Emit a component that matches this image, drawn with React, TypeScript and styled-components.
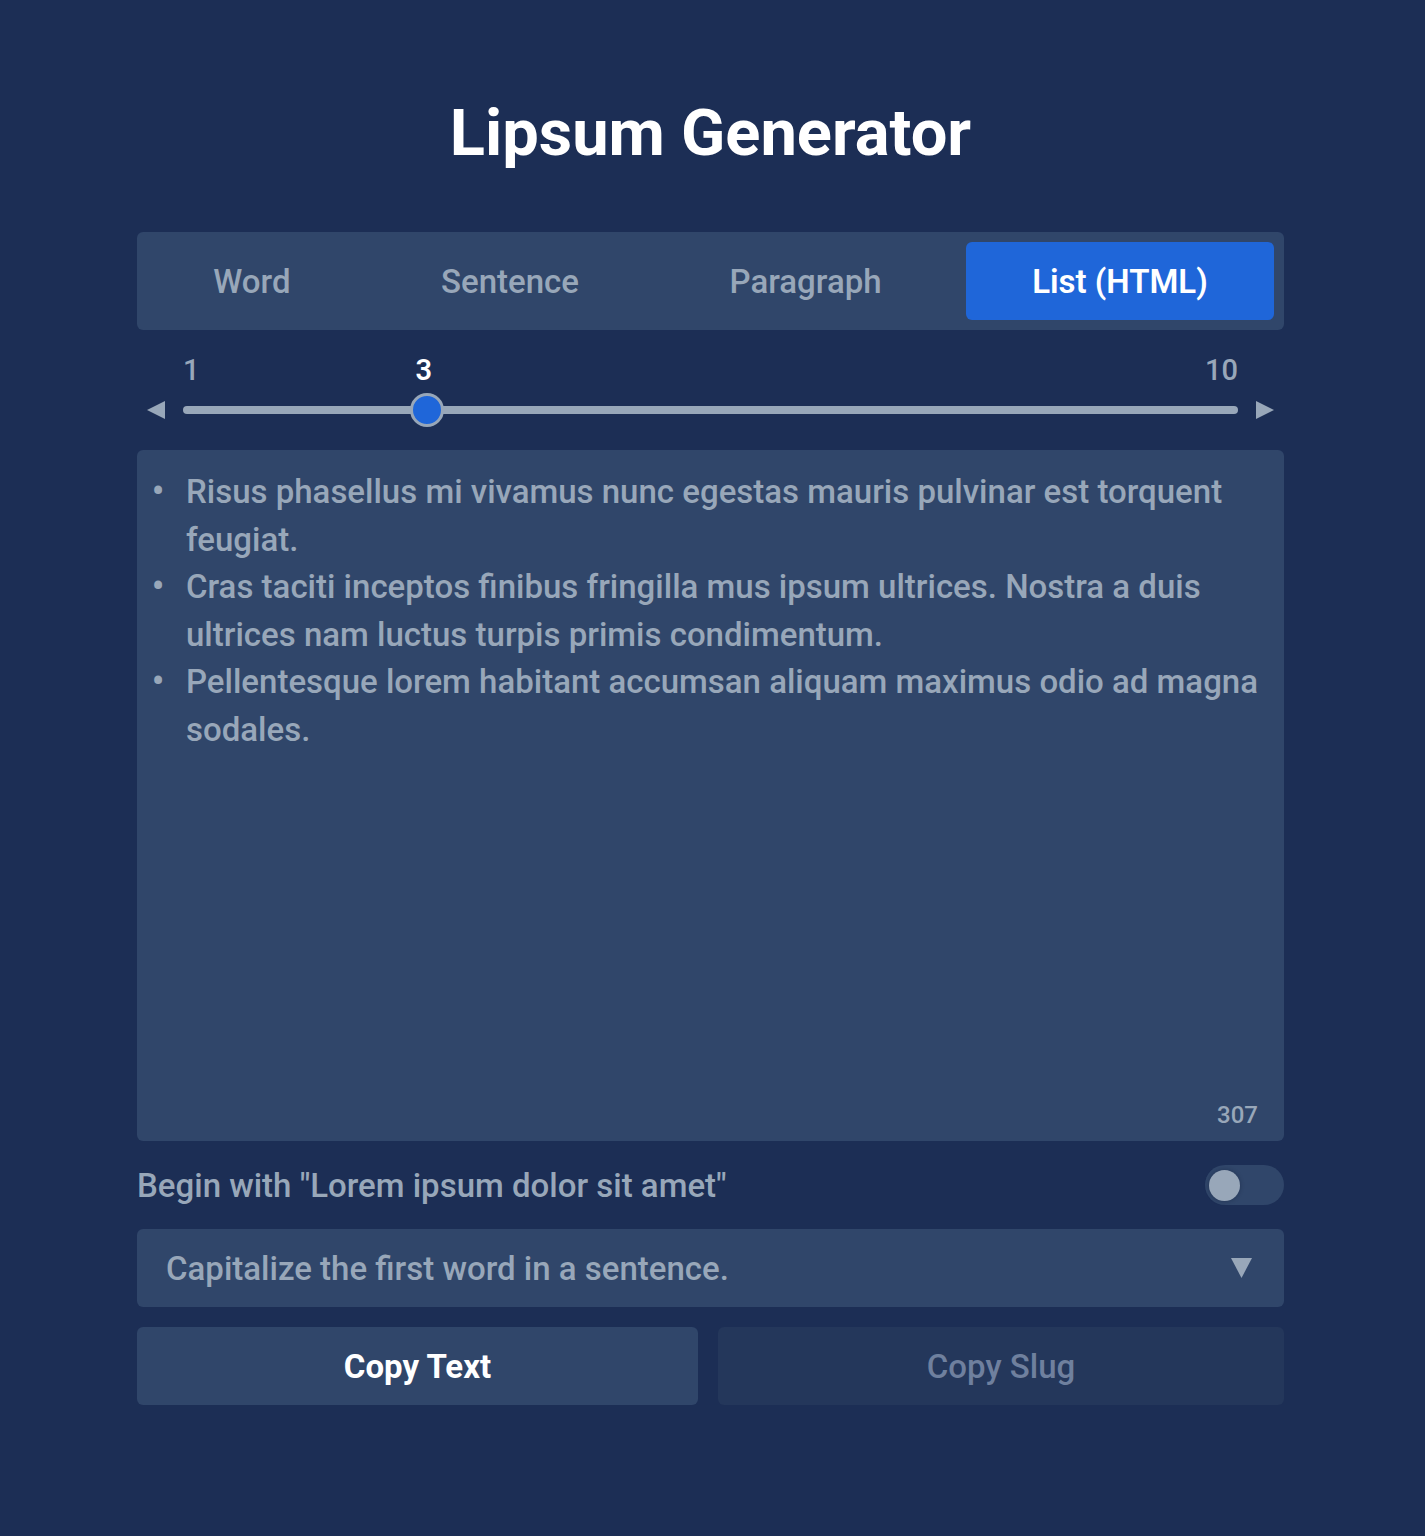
import React, { useState } from 'react';
import styled, { createGlobalStyle } from 'styled-components';

const colors = {
  page: '#1c2e55',
  panel: '#30466a',
  panelMuted: '#24375b',
  accent: '#1f66d9',
  text: '#98a7b9',
  textMuted: '#6f809e',
  white: '#ffffff',
};

const GlobalStyle = createGlobalStyle`
  html, body {
    margin: 0;
    padding: 0;
    background: ${colors.page};
  }
  body {
    min-height: 100vh;
    font-family: Roboto, "Liberation Sans", Arial, sans-serif;
    color: ${colors.text};
  }
  * {
    box-sizing: border-box;
  }
`;

const Page = styled.main`
  padding: 97px 141px 60px 137px;
  display: flex;
  flex-direction: column;
`;

const Title = styled.h1`
  margin: 0 0 63px;
  font-size: 65px;
  line-height: 72px;
  font-weight: 700;
  color: ${colors.white};
  text-align: center;
`;

const Stack = styled.div`
  display: flex;
  flex-direction: column;
  gap: 20px;
`;

const TabBar = styled.div`
  display: flex;
  gap: 18px;
  padding: 10px;
  border-radius: 6px;
  background: ${colors.panel};
`;

const Tab = styled.button<{ $active?: boolean }>`
  flex: 1 1 auto;
  height: 78px;
  border: 0;
  border-radius: 6px;
  font-family: inherit;
  font-size: 33px;
  font-weight: ${(p) => (p.$active ? 600 : 500)};
  color: ${(p) => (p.$active ? colors.white : colors.text)};
  background: ${(p) => (p.$active ? colors.accent : 'transparent')};
  cursor: pointer;
`;

const SliderRow = styled.div`
  display: flex;
  align-items: flex-end;
  gap: 18px;
  padding: 0 10px;
  height: 80px;
`;

const Arrow = styled.button`
  width: 18px;
  height: 40px;
  padding: 0;
  border: 0;
  background: none;
  display: flex;
  align-items: center;
  justify-content: center;
  cursor: pointer;
`;

const SliderBody = styled.div`
  flex: 1;
  display: flex;
  flex-direction: column;
`;

const Labels = styled.div`
  position: relative;
  height: 40px;
  display: flex;
  justify-content: space-between;
  align-items: center;
  font-size: 29px;
  font-weight: 500;
  color: ${colors.text};
`;

const ValueLabel = styled.span`
  position: absolute;
  top: 50%;
  transform: translate(-50%, -50%);
  color: ${colors.white};
  font-weight: 600;
`;

const Range = styled.input`
  -webkit-appearance: none;
  appearance: none;
  width: 100%;
  height: 40px;
  margin: 0;
  background: transparent;

  &::-webkit-slider-runnable-track {
    height: 8px;
    border-radius: 4px;
    background: ${colors.text};
  }
  &::-webkit-slider-thumb {
    -webkit-appearance: none;
    width: 34px;
    height: 34px;
    margin-top: -13px;
    border-radius: 50%;
    border: 3px solid ${colors.text};
    background: ${colors.accent};
  }
`;

const Output = styled.div`
  height: 691px;
  padding: 18px 20px 12px;
  border-radius: 6px;
  background: ${colors.panel};
  display: flex;
  flex-direction: column;
`;

const List = styled.ul`
  flex: 1;
  margin: 0;
  padding-left: 29px;
  font-size: 33px;
  line-height: 47.5px;
  font-weight: 500;
  color: ${colors.text};

  li::marker {
    content: '•\\00a0\\00a0\\200a';
    font-size: 36px;
  }
`;

const Count = styled.div`
  align-self: flex-end;
  padding-right: 6px;
  font-size: 24px;
  font-weight: 500;
  color: ${colors.text};
`;

const OptionRow = styled.label`
  display: flex;
  align-items: center;
  justify-content: space-between;
  height: 48px;
  font-size: 33px;
  font-weight: 500;
  color: ${colors.text};
`;

const Switch = styled.span<{ $on: boolean }>`
  width: 79px;
  height: 40px;
  padding: 0 4px;
  border-radius: 20px;
  background: ${(p) => (p.$on ? colors.accent : colors.panel)};
  display: flex;
  align-items: center;
  justify-content: ${(p) => (p.$on ? 'flex-end' : 'flex-start')};
  cursor: pointer;
`;

const Knob = styled.span`
  width: 31px;
  height: 31px;
  border-radius: 50%;
  background: ${colors.text};
  box-shadow: 0 0 4px rgba(10, 20, 40, 0.35);
`;

const Select = styled.div`
  height: 78px;
  padding: 0 32px 0 29px;
  border-radius: 6px;
  background: ${colors.panel};
  display: flex;
  align-items: center;
  justify-content: space-between;
  font-size: 33px;
  font-weight: 500;
  color: ${colors.text};
  cursor: pointer;
`;

const Buttons = styled.div`
  display: grid;
  grid-template-columns: 561px 1fr;
  gap: 20px;
`;

const Button = styled.button<{ $disabled?: boolean }>`
  height: 78px;
  border: 0;
  border-radius: 6px;
  font-family: inherit;
  font-size: 33px;
  font-weight: ${(p) => (p.$disabled ? 500 : 700)};
  color: ${(p) => (p.$disabled ? colors.textMuted : colors.white)};
  background: ${(p) => (p.$disabled ? colors.panelMuted : colors.panel)};
  cursor: ${(p) => (p.$disabled ? 'default' : 'pointer')};
`;

const Triangle = ({ dir }: { dir: 'left' | 'right' | 'down' }) => {
  const points =
    dir === 'left'
      ? '18,0 18,18 0,9'
      : dir === 'right'
      ? '0,0 0,18 18,9'
      : '0,0 21,0 10.5,20';
  const w = dir === 'down' ? 21 : 18;
  const h = dir === 'down' ? 20 : 18;
  return (
    <svg width={w} height={h} viewBox={`0 0 ${w} ${h}`}>
      <polygon points={points} fill={colors.text} />
    </svg>
  );
};

const items = [
  'Risus phasellus mi vivamus nunc egestas mauris pulvinar est torquent feugiat.',
  'Cras taciti inceptos finibus fringilla mus ipsum ultrices. Nostra a duis ultrices nam luctus turpis primis condimentum.',
  'Pellentesque lorem habitant accumsan aliquam maximus odio ad magna sodales.',
];

const tabs = ['Word', 'Sentence', 'Paragraph', 'List (HTML)'];

const App = () => {
  const [tab, setTab] = useState(3);
  const [count, setCount] = useState(3);
  const [beginLorem, setBeginLorem] = useState(false);

  const min = 1;
  const max = 10;
  const frac = (count - min) / (max - min);
  const html = `<ul>${items
    .slice(0, count)
    .map((i) => `<li>${i}</li>`)
    .join('')}</ul>`;

  return (
    <>
      <GlobalStyle />
      <Page>
        <Title>Lipsum Generator</Title>
        <Stack>
          <TabBar>
            {tabs.map((t, i) => (
              <Tab key={t} $active={i === tab} onClick={() => setTab(i)}>
                {t}
              </Tab>
            ))}
          </TabBar>

          <SliderRow>
            <Arrow onClick={() => setCount(Math.max(min, count - 1))}>
              <Triangle dir="left" />
            </Arrow>
            <SliderBody>
              <Labels>
                <span>{min}</span>
                <ValueLabel
                  style={{ left: `calc(14px + ${frac} * (100% - 34px))` }}
                >
                  {count}
                </ValueLabel>
                <span>{max}</span>
              </Labels>
              <Range
                type="range"
                min={min}
                max={max}
                value={count}
                onChange={(e) => setCount(Number(e.target.value))}
              />
            </SliderBody>
            <Arrow onClick={() => setCount(Math.min(max, count + 1))}>
              <Triangle dir="right" />
            </Arrow>
          </SliderRow>

          <Output>
            <List>
              {items.slice(0, count).map((item) => (
                <li key={item}>{item}</li>
              ))}
            </List>
            <Count>{html.length ? 307 : 0}</Count>
          </Output>

          <OptionRow>
            Begin with "Lorem ipsum dolor sit amet"
            <Switch $on={beginLorem} onClick={() => setBeginLorem(!beginLorem)}>
              <Knob />
            </Switch>
          </OptionRow>

          <Select>
            Capitalize the first word in a sentence.
            <Triangle dir="down" />
          </Select>

          <Buttons>
            <Button>Copy Text</Button>
            <Button $disabled>Copy Slug</Button>
          </Buttons>
        </Stack>
      </Page>
    </>
  );
};

export default App;
